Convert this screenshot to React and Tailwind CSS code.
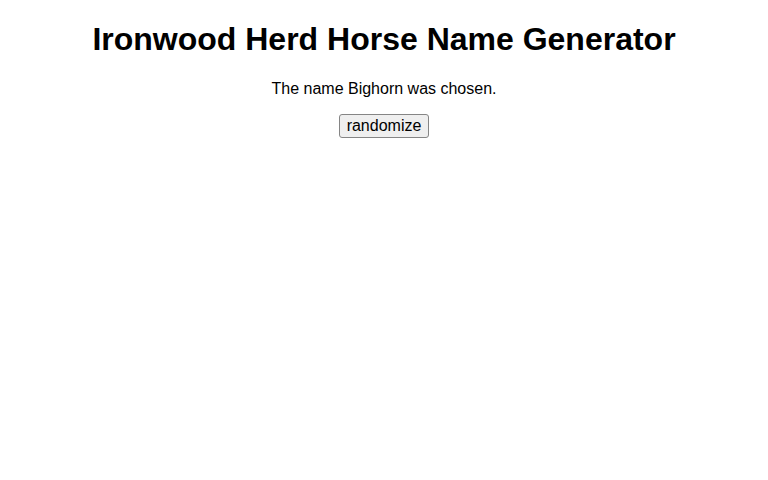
import React, { useState } from 'react'

const NAMES = ['Bighorn', 'Juniper', 'Ironside', 'Dusty', 'Cinder', 'Flint', 'Mesquite', 'Sagebrush', 'Copper', 'Thistle']

export default function App() {
  const [name, setName] = useState('Bighorn')

  const randomize = () => {
    setName(NAMES[Math.floor(Math.random() * NAMES.length)])
  }

  return (
    <div className="min-h-screen bg-white text-black text-center font-['Liberation_Sans',Arial,sans-serif] leading-[normal]">
      <h1 className="text-[32px] leading-[normal] font-bold my-[21.44px]">Ironwood Herd Horse Name Generator</h1>
      <p className="text-base leading-[normal] my-4">The name {name} was chosen.</p>
      <button
        className="text-base leading-[normal] px-[7px] py-[2px] bg-[#efefef] border border-[#858585] rounded-[3px] hover:bg-[#e5e5e5]"
        onClick={randomize}
      >
        randomize
      </button>
    </div>
  )
}
